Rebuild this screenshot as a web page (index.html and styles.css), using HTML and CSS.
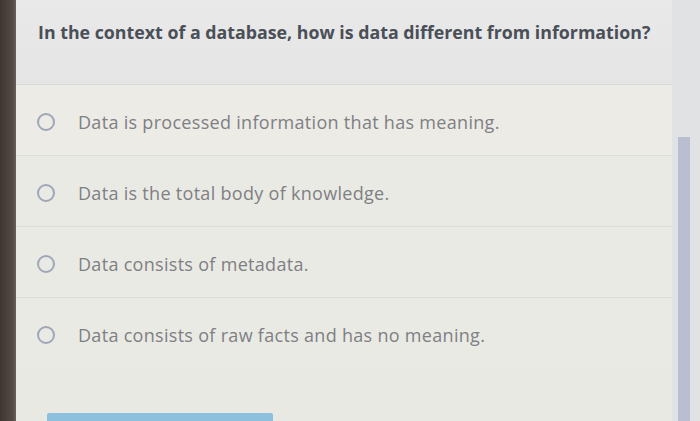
FILE: index.html
```html
<!DOCTYPE html>
<html lang="en">
<head>
<meta charset="utf-8">
<title>Question</title>
<link rel="stylesheet" href="styles.css">
</head>
<body>
<div class="screen">
  <div class="bezel"></div>
  <main class="content">
    <header class="question">
      <h1 class="question-text">In the context of a database, how is data different from information?</h1>
    </header>
    <ul class="options">
      <li class="option option-first"><span class="radio"></span><span class="label">Data is processed information that has meaning.</span></li>
      <li class="option"><span class="radio"></span><span class="label">Data is the total body of knowledge.</span></li>
      <li class="option"><span class="radio"></span><span class="label">Data consists of metadata.</span></li>
      <li class="option option-last"><span class="radio"></span><span class="label">Data consists of raw facts and has no meaning.</span></li>
    </ul>
    <div class="actions"><span class="button"></span></div>
  </main>
  <aside class="gutter"><div class="thumb"></div></aside>
</div>
</body>
</html>
```
FILE: styles.css
```css
* { box-sizing: border-box; }
html, body { margin: 0; padding: 0; }
body {
  width: 700px;
  height: 421px;
  overflow: hidden;
  background: #e8e8e4;
  font-family: "Open Sans", "Liberation Sans", sans-serif;
}
.screen {
  display: grid;
  grid-template-columns: 16px 1fr 28px;
  height: 421px;
}
.bezel {
  background: linear-gradient(90deg, #3e3632 0%, #554b45 80%, #6b625b 100%);
}
.content {
  display: flex;
  flex-direction: column;
  background: #e9e9e4;
}
.question {
  height: 85px;
  background: linear-gradient(180deg, #e8e9e8 0%, #e4e5e4 100%);
  border-bottom: 1px solid #d8d9d6;
  padding: 20px 0 0 22px;
}
.question-text {
  margin: 0;
  font-size: 17.8px;
  font-weight: 700;
  color: #4a4f58;
  line-height: 24px;
}
.options {
  list-style: none;
  margin: 0;
  padding: 0;
}
.option {
  display: flex;
  align-items: center;
  height: 71px;
  padding-left: 21px;
  padding-top: 3px;
  border-bottom: 1px solid #dddeda;
  background: #eaeae5;
}
.option-first { background: #ecebe6; }
.option-last { border-bottom: none; }
.radio {
  width: 18px;
  height: 18px;
  border: 2px solid #9ea6b8;
  border-radius: 50%;
  flex: none;
}
.label {
  margin-left: 23px;
  font-size: 18px;
  letter-spacing: 0.3px;
  color: #7e8083;
  line-height: 22px;
}
.actions {
  flex: 1;
  display: flex;
  align-items: flex-end;
  padding-left: 31px;
}
.button {
  display: block;
  width: 226px;
  height: 8px;
  background: #8dc0dc;
  border-radius: 2px 2px 0 0;
}
.gutter {
  background: #e1e2e4;
  padding: 137px 0 0 6px;
}
.thumb {
  width: 12px;
  height: 284px;
  background: #b9bed0;
}
```
